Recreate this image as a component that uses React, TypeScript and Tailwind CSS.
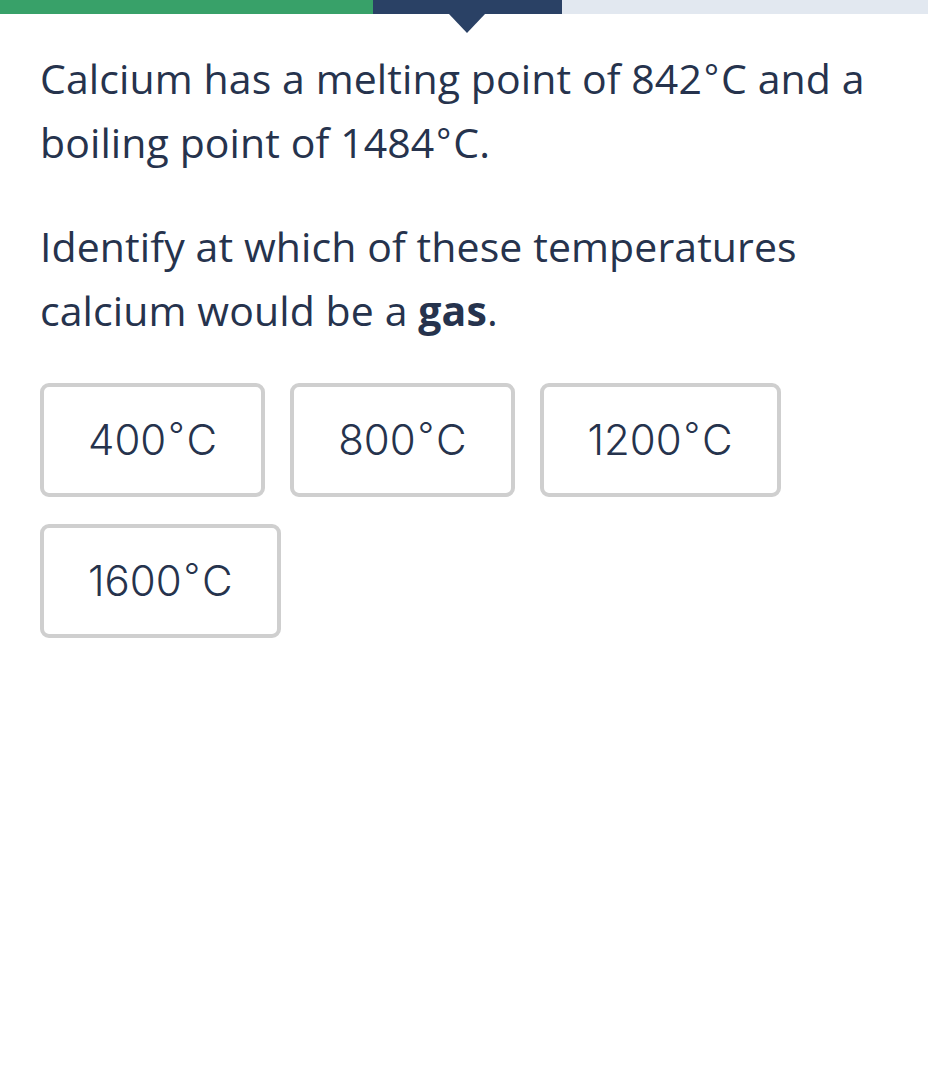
import React from "react";

const options = ["400", "800", "1200", "1600"];

const Deg = () => <span className="relative -top-[4px] mx-[2px] text-[0.85em] leading-none">°</span>;

export default function App() {
  return (
    <div className="min-h-[1078px] w-[928px] bg-white text-[#26334d]" style={{ fontFamily: "'Open Sans', sans-serif" }}>
      <div className="relative flex h-[14px] w-full">
        <div className="h-full w-[373px] bg-[#38a169]" />
        <div className="h-full w-[189px] bg-[#2a4165]" />
        <div className="h-full flex-1 bg-[#e2e8f0]" />
        <div className="absolute left-[449px] top-[14px] h-0 w-0 border-x-[18px] border-t-[19px] border-x-transparent border-t-[#2a4165]" />
      </div>

      <div className="px-[40px] pt-[32px]">
        <p className="max-w-[848px] text-[41px] leading-[64px] tracking-[0.1px]">
          Calcium has a melting point of 842<Deg />C and a boiling point of 1484<Deg />C.
        </p>
        <p className="mt-[40px] max-w-[800px] text-[41px] leading-[64px] tracking-[0.1px]">
          Identify at which of these temperatures calcium would be a <span className="font-bold">gas</span>.
        </p>

        <div className="mt-[41px] flex max-w-[760px] flex-wrap gap-x-[25px] gap-y-[27px]" style={{ fontFamily: "Inter, sans-serif" }}>
          {options.map((o) => (
            <button
              key={o}
              className="flex h-[114px] items-center justify-center rounded-[9px] border-[4px] border-[#cfcfcf] bg-white px-[44px] text-[42px] font-light leading-none text-[#26334d]"
            >
              {o}
              <Deg />C
            </button>
          ))}
        </div>
      </div>
    </div>
  );
}
